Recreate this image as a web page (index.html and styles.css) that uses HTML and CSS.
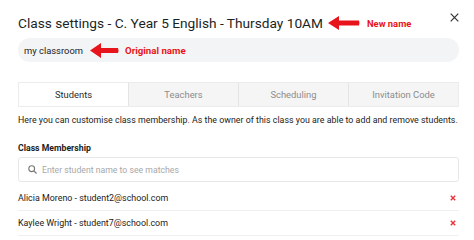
FILE: index.html
```
<!DOCTYPE html>
<html>
<head>
<meta charset="utf-8">
<link rel="stylesheet" href="styles.css">
</head>
<body>
<div class="modal">
  <div class="header">
    <h1 class="title">Class settings - C. Year 5 English - Thursday 10AM</h1>
    <span class="annot annot-new">
      <svg class="arrow" width="32" height="14" viewBox="0 0 32 14"><path d="M0 7 L11 0 L11 4.5 L31 4.5 Q32 7 31 9.5 L11 9.5 L11 14 Z" fill="#e8141b"/></svg>
      <span class="annot-text">New name</span>
    </span>
    <span class="close">
      <svg width="9" height="9" viewBox="0 0 9 9"><path d="M0.7 0.7 L8.3 8.3 M8.3 0.7 L0.7 8.3" stroke="#333" stroke-width="1.2"/></svg>
    </span>
  </div>
  <div class="name-field">
    <span class="name-value">my classroom</span>
    <span class="annot annot-orig">
      <svg class="arrow" width="29" height="15" viewBox="0 0 29 15"><path d="M0 7.5 L11 0 L11 5 L28 5 Q29 7.5 28 10 L11 10 L11 15 Z" fill="#e8141b"/></svg>
      <span class="annot-text">Original name</span>
    </span>
  </div>
  <div class="tabs">
    <div class="tab active">Students</div>
    <div class="tab">Teachers</div>
    <div class="tab">Scheduling</div>
    <div class="tab">Invitation Code</div>
  </div>
  <p class="desc">Here you can customise class membership. As the owner of this class you are able to add and remove students.</p>
  <div class="label">Class Membership</div>
  <div class="search">
    <svg class="search-icon" width="9" height="9" viewBox="0 0 9 9"><circle cx="3.7" cy="3.7" r="2.9" fill="none" stroke="#777" stroke-width="1.1"/><path d="M5.9 5.9 L8.5 8.5" stroke="#777" stroke-width="1.2"/></svg>
    <span class="placeholder">Enter student name to see matches</span>
  </div>
  <div class="members">
    <div class="row">
      <span>Alicia Moreno - student2@school.com</span>
      <span class="remove"><svg width="6" height="6" viewBox="0 0 6 6"><path d="M0.8 0.8 L5.2 5.2 M5.2 0.8 L0.8 5.2" stroke="#e8333a" stroke-width="1.4"/></svg></span>
    </div>
    <div class="row">
      <span>Kaylee Wright - student7@school.com</span>
      <span class="remove"><svg width="6" height="6" viewBox="0 0 6 6"><path d="M0.8 0.8 L5.2 5.2 M5.2 0.8 L0.8 5.2" stroke="#e8333a" stroke-width="1.4"/></svg></span>
    </div>
  </div>
</div>
</body>
</html>
```
FILE: styles.css
```
* { box-sizing: border-box; }
html, body { margin: 0; padding: 0; background: #fff; }
body { font-family: Roboto, "Liberation Sans", sans-serif; color: #1f2329; width: 474px; height: 240px; overflow: hidden; }
.modal { padding: 15px 0 0 18px; width: 474px; }
.header { display: flex; align-items: center; height: 16px; width: 440px; }
.title { margin: 0; font-size: 13.7px; line-height: 16px; font-weight: 400; color: #1c1f24; white-space: nowrap; }
.annot { display: inline-flex; align-items: center; }
.annot-new { margin-left: 5px; }
.annot-text { color: #e8141b; font-weight: 700; font-size: 9.4px; margin-left: 7px; }
.close { margin-left: auto; margin-right: -1px; display: flex; position: relative; top: -6px; }
.name-field { margin-top: 7px; width: 441px; height: 24px; background: #f3f4f6; border-radius: 12px; display: flex; align-items: center; padding-left: 6px; }
.name-value { font-size: 9.4px; color: #222; }
.annot-orig { margin-left: 7px; }
.annot-orig .annot-text { font-size: 9.7px; margin-left: 6px; }
.tabs { margin-top: 20px; width: 441px; height: 25px; display: flex; border: 1px solid #ececec; }
.tab { flex: 1; display: flex; align-items: center; justify-content: center; font-size: 9.4px; color: #8c8c8c; background: #f5f5f5; border-left: 1px solid #e4e4e4; }
.tab:first-child { border-left: none; }
.tab.active { background: #fff; color: #2a2a2a; }
.desc { margin: 7px 0 0 0; font-size: 8.8px; letter-spacing: 0.03px; line-height: 12px; color: #222; white-space: nowrap; }
.label { margin-top: 16px; font-size: 8.7px; line-height: 12px; font-weight: 700; color: #222; }
.search { margin-top: 3px; width: 441px; height: 25px; border: 1px solid #e8e8e8; border-radius: 3px; display: flex; align-items: center; padding-left: 9px; }
.placeholder { margin-left: 5px; font-size: 8.7px; color: #a8a8a8; }
.members { margin-top: 4px; }
.row { width: 441px; height: 25px; display: flex; align-items: center; justify-content: space-between; font-size: 8.9px; color: #222; border-bottom: 1px solid #f0f0f0; padding-right: 3px; }
.remove { display: flex; }
```
